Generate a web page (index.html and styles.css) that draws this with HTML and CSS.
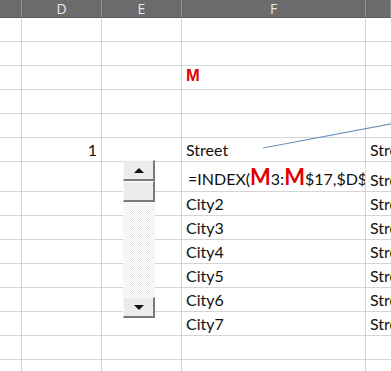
FILE: index.html
```html
<!DOCTYPE html>
<html lang="en">
<head>
  <meta charset="UTF-8" />
  <title>Sheet</title>
  <link rel="stylesheet" href="styles.css">
</head>
<body>
  <div class="sheet">
    <div class="row head">
      <div class="cell c0"></div>
      <div class="cell cd">D</div>
      <div class="cell ce">E</div>
      <div class="cell cf">F</div>
      <div class="cell cg"></div>
    </div>
    <div class="row"><div class="cell c0"></div><div class="cell cd"></div><div class="cell ce"></div><div class="cell cf"></div><div class="cell cg"></div></div>
    <div class="row"><div class="cell c0"></div><div class="cell cd"></div><div class="cell ce"></div><div class="cell cf"></div><div class="cell cg"></div></div>
    <div class="row"><div class="cell c0"></div><div class="cell cd"></div><div class="cell ce"></div><div class="cell cf"><span class="red-m">M</span></div><div class="cell cg"></div></div>
    <div class="row"><div class="cell c0"></div><div class="cell cd"></div><div class="cell ce"></div><div class="cell cf"></div><div class="cell cg"></div></div>
    <div class="row"><div class="cell c0"></div><div class="cell cd"></div><div class="cell ce"></div><div class="cell cf"></div><div class="cell cg"></div></div>
    <div class="row"><div class="cell c0"></div><div class="cell cd num">1</div><div class="cell ce"></div><div class="cell cf">Street</div><div class="cell cg">Street</div></div>
    <div class="row tall"><div class="cell c0"></div><div class="cell cd"></div><div class="cell ce"></div><div class="cell cf formula">=INDEX(<b class="big">M</b>3:<b class="big">M</b>$17,$D$6)</div><div class="cell cg">Street</div></div>
    <div class="row"><div class="cell c0"></div><div class="cell cd"></div><div class="cell ce"></div><div class="cell cf">City2</div><div class="cell cg">Street</div></div>
    <div class="row"><div class="cell c0"></div><div class="cell cd"></div><div class="cell ce"></div><div class="cell cf">City3</div><div class="cell cg">Street</div></div>
    <div class="row"><div class="cell c0"></div><div class="cell cd"></div><div class="cell ce"></div><div class="cell cf">City4</div><div class="cell cg">Street</div></div>
    <div class="row"><div class="cell c0"></div><div class="cell cd"></div><div class="cell ce"></div><div class="cell cf">City5</div><div class="cell cg">Street</div></div>
    <div class="row"><div class="cell c0"></div><div class="cell cd"></div><div class="cell ce"></div><div class="cell cf">City6</div><div class="cell cg">Street</div></div>
    <div class="row"><div class="cell c0"></div><div class="cell cd"></div><div class="cell ce"></div><div class="cell cf">City7</div><div class="cell cg">Street</div></div>
    <div class="row"><div class="cell c0"></div><div class="cell cd"></div><div class="cell ce"></div><div class="cell cf"></div><div class="cell cg"></div></div>
    <div class="row"><div class="cell c0"></div><div class="cell cd"></div><div class="cell ce"></div><div class="cell cf"></div><div class="cell cg"></div></div>

    <!-- arrow line drawn on the sheet -->
    <svg class="arrow" width="130" height="30" viewBox="0 0 130 30">
      <line x1="0" y1="27" x2="130" y2="2.5" stroke="#6b93bb" stroke-width="1.2"/>
    </svg>

    <!-- form control scroll bar -->
    <div class="scroller">
      <div class="sb-btn"><span class="tri up"></span></div>
      <div class="sb-thumb"></div>
      <div class="sb-track"></div>
      <div class="sb-btn"><span class="tri down"></span></div>
    </div>
  </div>
</body>
</html>
```

FILE: styles.css
```css
body {
  margin: 0;
  background: #fff;
  font-family: Lato, "Liberation Sans", sans-serif;
  overflow: hidden;
}

.sheet {
  position: relative;
  width: 391px;
  height: 371px;
  overflow: hidden;
}

.row {
  display: flex;
  height: 24px;
}

.row.tall {
  height: 30px;
}

.cell {
  box-sizing: border-box;
  height: 100%;
  border-right: 1px solid #d4d4d4;
  border-bottom: 1px solid #d4d4d4;
  display: flex;
  align-items: flex-end;
  padding: 0 4px 2px 4px;
  font-size: 16px;
  color: #111;
  white-space: nowrap;
  overflow: hidden;
}

.c0 { width: 22px; flex: none; }
.cd { width: 80px; flex: none; }
.ce { width: 80px; flex: none; }
.cf { width: 184px; flex: none; }
.cg { flex: 1; border-right: none; }

.head {
  height: 18px;
}

.head .cell {
  background: #6b6b6b;
  color: #e4e9ef;
  border-right: 1px solid #8f8f8f;
  border-bottom: 1px solid #5c5c5c;
  justify-content: center;
  align-items: center;
  padding: 0;
  font-family: "Open Sans", sans-serif;
  font-size: 14px;
}

.cell.num {
  justify-content: flex-end;
}

.red-m {
  color: #e00000;
  font-weight: bold;
  font-family: "Liberation Sans", sans-serif;
  font-size: 16.5px;
  margin-bottom: 2px;
}

.formula {
  padding-left: 6px;
  padding-bottom: 3px;
}

.big {
  color: #e00000;
  font-size: 22px;
  line-height: 1;
}

.arrow {
  position: absolute;
  left: 263px;
  top: 121px;
}

.scroller {
  position: absolute;
  left: 123px;
  top: 160px;
  width: 32px;
  height: 158px;
  display: flex;
  flex-direction: column;
}

.sb-btn, .sb-thumb {
  box-sizing: border-box;
  height: 21px;
  background: #ececec;
  border-top: 1px solid #fafafa;
  border-left: 1px solid #fafafa;
  border-right: 2px solid #7a7a7a;
  border-bottom: 2px solid #7a7a7a;
  display: flex;
  align-items: center;
  justify-content: center;
}

.sb-track {
  flex: 1;
  background-color: #ffffff;
  background-image: repeating-conic-gradient(#ececec 0 25%, #ffffff 0 50%);
  background-size: 2px 2px;
}

.tri {
  width: 0;
  height: 0;
  border-left: 5px solid transparent;
  border-right: 5px solid transparent;
}

.tri.up {
  border-bottom: 5px solid #111;
}

.tri.down {
  border-top: 5px solid #111;
}
```
